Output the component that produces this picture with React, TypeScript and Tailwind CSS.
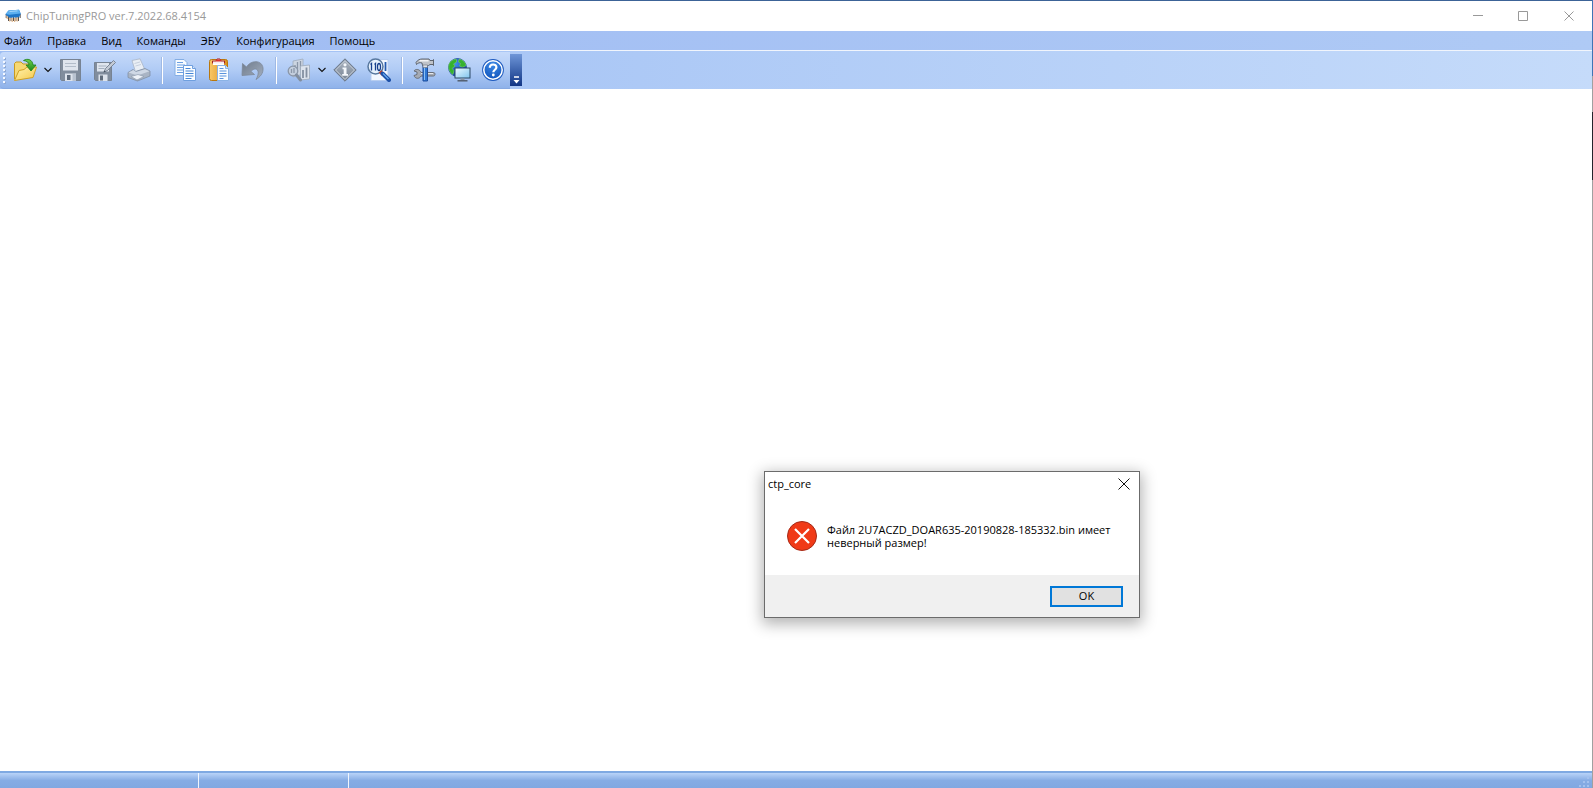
import type { ReactNode } from "react";

const menus = ["Файл", "Правка", "Вид", "Команды", "ЭБУ", "Конфигурация", "Помощь"];

function Defs() {
  return (
    <svg width="0" height="0" className="absolute" aria-hidden="true">
      <defs>
        <linearGradient id="folder" x1="0" y1="0" x2="1" y2="1">
          <stop offset="0" stopColor="#fff3b0" />
          <stop offset="1" stopColor="#f5c84a" />
        </linearGradient>
        <linearGradient id="green" x1="0" y1="0" x2="0" y2="1">
          <stop offset="0" stopColor="#6fd04a" />
          <stop offset="1" stopColor="#1c8a1c" />
        </linearGradient>
        <linearGradient id="gray" x1="0" y1="0" x2="0" y2="1">
          <stop offset="0" stopColor="#a9b2bf" />
          <stop offset="1" stopColor="#7b8796" />
        </linearGradient>
        <linearGradient id="arrow" x1="0" y1="0" x2="1" y2="1">
          <stop offset="0" stopColor="#6f7b8b" />
          <stop offset="1" stopColor="#a5b1c2" />
        </linearGradient>
        <linearGradient id="board" x1="0" y1="0" x2="1" y2="0">
          <stop offset="0" stopColor="#f9c766" />
          <stop offset="1" stopColor="#d98f1c" />
        </linearGradient>
        <linearGradient id="screen" x1="0" y1="0" x2="1" y2="1">
          <stop offset="0" stopColor="#e8f8ff" />
          <stop offset="1" stopColor="#84c6ee" />
        </linearGradient>
        <radialGradient id="globe" cx="0.4" cy="0.3" r="0.8">
          <stop offset="0" stopColor="#3f8fe8" />
          <stop offset="1" stopColor="#0a2f9a" />
        </radialGradient>
        <radialGradient id="help" cx="0.5" cy="0.2" r="0.9">
          <stop offset="0" stopColor="#3f8be6" />
          <stop offset="1" stopColor="#0d4fb8" />
        </radialGradient>
      </defs>
    </svg>
  );
}

function Icon({ children }: { children: ReactNode }) {
  return (
    <svg width="24" height="24" viewBox="0 0 24 24" fill="none" aria-hidden="true">
      {children}
    </svg>
  );
}

function OpenIcon() {
  return (
    <Icon>
      <path d="M1.500 21V5.500L3 4h5l2 2h6l1.500 1.500V11" fill="#f6d873" stroke="#c99a20" />
      <path d="M1.500 22.500L6 12.500l5-1 3-2.500h9.500L20 19.500 1.500 22.500z" fill="url(#folder)" stroke="#d0a024" strokeLinejoin="round" />
      <path d="M10.500 2.500c4-2.500 9-1 9.500 4.500h3l-5 6-5-6h3c0-2.500-2-4-5.500-4.500z" fill="url(#green)" stroke="#1b7d1b" strokeWidth="0.800" strokeLinejoin="round" />
    </Icon>
  );
}

function SaveIcon() {
  return (
    <Icon>
      <path d="M1.500 1.500h20v21h-19l-1-1z" fill="#818d9d" stroke="#778393" strokeLinejoin="round" />
      <path d="M4 2h15v10.500H4z" fill="#dfe5ee" />
      <path d="M6 5.500h11M6 8.500h11" stroke="#b3bdca" />
      <path d="M6 15.500h11V23H6z" fill="#dde3ec" />
      <path d="M8 17h3.500v5H8z" fill="#5f6b7b" />
      <path d="M13.500 16H17v7h-3.500z" fill="#b9c3d1" />
    </Icon>
  );
}

function SaveAsIcon() {
  return (
    <Icon>
      <path d="M1.500 4.500h17v18h-16l-1-1z" fill="#818d9d" stroke="#778393" strokeLinejoin="round" />
      <path d="M4 5h12v8.500H4z" fill="#dfe5ee" />
      <path d="M5.500 8h8M5.500 10.500h6" stroke="#a5b0bf" />
      <path d="M5.500 16.500h9V23h-9z" fill="#dde3ec" />
      <path d="M7 17.500h3v5H7z" fill="#5f6b7b" />
      <path d="M11 14l1.500-3.500 8-8 2 2-8 8L11 14z" fill="#c3cad5" stroke="#727e8e" strokeWidth="0.900" />
      <path d="M10.500 14.500l2.200-1-1.100-1.100z" fill="#3f4a58" />
    </Icon>
  );
}

function PrintIcon() {
  return (
    <Icon>
      <path d="M5 2.500L13 .8l4.500 10-9 3z" fill="#e9eef5" stroke="#aab5c5" strokeWidth="0.800" />
      <path d="M7.500 5.500l5.500-1.500M8.500 8l5.500-1.500" stroke="#bdc7d5" strokeWidth="0.800" />
      <path d="M1 14.500l5-3 2.500 2L18 10.500l5 2.500v5l-12.500 5L1 19.500z" fill="#a9b4c4" stroke="#8190a4" strokeWidth="0.800" strokeLinejoin="round" />
      <path d="M1.500 14.500l5-2.500 2.500 2 9-2.800 4.500 2-12 4.300z" fill="#cfd8e5" />
      <path d="M10.500 18v4.500" stroke="#8795a8" />
      <path d="M4 18.500l7-2 6 2-7 3.500z" fill="#eef2f8" stroke="#8e9caf" strokeWidth="0.700" />
    </Icon>
  );
}

function CopyIcon() {
  return (
    <Icon>
      <path d="M2 1.500h9l3 3v13H2z" fill="#f7fbff" stroke="#84aee4" />
      <path d="M4 4.500h6M4 7h8M4 9.500h8M4 12h6M4 14.500h6" stroke="#6a9fe2" />
      <path d="M10.500 7.500h9l3 3v12h-12z" fill="#fafdff" stroke="#6f9fdf" />
      <path d="M19.500 7.500v3h3" fill="#cfe2f9" stroke="#6f9fdf" />
      <path d="M12.500 10.500h5M12.500 13h8M12.500 15.500h8M12.500 18h8M12.500 20.500h6" stroke="#4686d6" />
    </Icon>
  );
}

function PasteIcon() {
  return (
    <Icon>
      <rect x="2.500" y="1.500" width="18" height="21" rx="2" fill="url(#board)" stroke="#b9770d" />
      <path d="M6 2.500h11V7H6z" fill="#fff" />
      <path d="M5.500 5.500V3h3.500l1-2h3l1 2h3.500v2.500" fill="#f8eaea" stroke="#a32020" />
      <path d="M9 2.500h5" stroke="#d93030" strokeWidth="2" />
      <path d="M10.500 7.500h8l3 3v12h-11z" fill="#f8fcff" stroke="#8bb3e6" />
      <path d="M18.500 7.500v3h3" fill="#d3e5fa" stroke="#8bb3e6" />
      <path d="M12.500 10.500h4M12.500 13h7M12.500 15.500h7M12.500 18h7M12.500 20.500h4" stroke="#5a93dc" />
    </Icon>
  );
}

function UndoIcon() {
  return (
    <Icon>
      <path d="M1.500 5.500l4 3.500C9.500 2 21 1.500 22 10c.500 5.500-3 9-7 11.500 3-5 3-10-.5-10.500-2-.2-3.500 1-4.500 2.500l3.500 3-12.500 1z" fill="url(#arrow)" stroke="#7c8898" strokeWidth="0.800" strokeLinejoin="round" />
    </Icon>
  );
}

function ChartIcon() {
  return (
    <Icon>
      <path d="M6 3l10-2v15l-10 3z" fill="#ccd5e1" stroke="#a0acbc" strokeWidth="0.800" />
      <path d="M8 7v5M10.500 4v7M13.500 3v9" stroke="#8a96a7" strokeWidth="1.300" />
      <path d="M13.500 8l9-1v14l-9 1z" fill="#dce3ed" stroke="#9daaba" strokeWidth="0.800" />
      <path d="M16 12v8M19.500 9.500v10" stroke="#8490a1" strokeWidth="1.800" />
      <circle cx="6" cy="13" r="4.800" fill="#c3cedd" stroke="#8a96a7" strokeWidth="1.300" />
      <path d="M4.500 11v4M7 10v5" stroke="#8c98a9" strokeWidth="1.300" />
      <path d="M9.500 17l4 5" stroke="#828e9f" strokeWidth="3" strokeLinecap="round" />
    </Icon>
  );
}

function InfoIcon() {
  return (
    <Icon>
      <path d="M12 .8L23.200 12 12 23.200.8 12z" fill="#6f7c8c" stroke="#6f7b8b" />
      <path d="M12 2.500L21.500 12 12 21.500 2.500 12z" fill="url(#gray)" stroke="#d5dce6" />
      <circle cx="12" cy="6.800" r="1.600" fill="#f4f7fb" />
      <path d="M9.500 9.500h4v6.500h1.500v1.800H9.200V16h1.500v-4.700H9.500z" fill="#f4f7fb" />
    </Icon>
  );
}

function SearchIcon() {
  return (
    <Icon>
      <path d="M4 1.500h17v21H4z" fill="#f2f7ff" stroke="#b7cdf0" />
      <path d="M18.500 4v9" stroke="#245bb0" strokeWidth="1.800" />
      <circle cx="8.500" cy="8.500" r="7.500" fill="#e6f1fd" stroke="#58789f" strokeWidth="1.500" />
      <path d="M3.500 6.500l1-1v7M7.500 6.500l1-1v7" stroke="#173f8c" strokeWidth="1.300" />
      <ellipse cx="12" cy="9" rx="1.500" ry="3.500" stroke="#173f8c" strokeWidth="1.300" />
      <path d="M13 13.500l3 3" stroke="#c2452e" strokeWidth="3.500" />
      <path d="M15.500 15.500l6.500 6.500" stroke="#1c50a8" strokeWidth="4" strokeLinecap="round" />
      <path d="M16 15.500l5.500 5.500" stroke="#68a8ec" strokeWidth="1.200" />
    </Icon>
  );
}

function ToolsIcon() {
  return (
    <Icon>
      <path d="M1 13l3 1v2.500l-3 1c1 3.500 5.500 3.800 7 .5h12.500c2 0 2-3.500 0-3.500H8c-1-3.500-5.500-4-7-1.500z" fill="#a6abb4" stroke="#62666e" strokeWidth="0.900" strokeLinejoin="round" />
      <path d="M8 15.500h12" stroke="#e6e8eb" />
      <path d="M3 4.500C4.500 2 7 1 9 1h7l1 1.500h3l.5-1v6l-.5-1h-3l-1.500 1h-6L9 5C6.500 4.200 5 5 3.500 6.500z" fill="#bfc3c9" stroke="#555a62" strokeWidth="0.900" strokeLinejoin="round" />
      <path d="M6.500 2.800h9" stroke="#fff" strokeWidth="1.200" />
      <path d="M10 7.500h4.500v15.500H10z" fill="#2f78d4" stroke="#1f4f9e" />
      <path d="M11.500 9v13" stroke="#8cc0f5" />
      <path d="M10 7h4.500v2.500H10z" fill="#dfe2e6" stroke="#6b7078" strokeWidth="0.600" />
    </Icon>
  );
}

function NetworkIcon() {
  return (
    <Icon>
      <circle cx="10.500" cy="9.500" r="9" fill="url(#globe)" stroke="#17479c" strokeWidth="0.800" />
      <path d="M2.500 5C5 2 8 .8 9.500 1.500L9.500 4 6.500 6l1.500 2L5 10.500l2 2-1 4C2.500 14.500.5 10 2.500 5zM12 1.200c4 .5 6.500 3 7 6.500l-3.500 1.500L12.500 8l1-2.500-2-1.500z" fill="#35b22e" stroke="#86dc62" strokeWidth="0.500" />
      <path d="M7.500 9.500h16v11h-16z" fill="#2a4763" />
      <path d="M8.500 10.500h14v9h-14z" fill="url(#screen)" />
      <path d="M13.500 20.500h4V22h-4z" fill="#8a95a3" />
      <path d="M10.500 22.800h10" stroke="#4d5967" strokeWidth="1.400" />
    </Icon>
  );
}

function HelpIcon() {
  return (
    <Icon>
      <circle cx="12" cy="12" r="10.900" fill="#1d5abf" />
      <circle cx="12" cy="12" r="9.200" fill="url(#help)" stroke="#fff" strokeWidth="1.500" />
      <path d="M8.800 9.800c0-4.400 6.600-4.200 6.600-.5 0 2.400-3.100 2.500-3.100 5" stroke="#fff" strokeWidth="2.200" />
      <circle cx="12.300" cy="17" r="1.400" fill="#fff" />
    </Icon>
  );
}

function ChipIcon() {
  return (
    <svg width="16" height="16" viewBox="0 0 16 16" fill="none" aria-hidden="true">
      <path d="M1.200 6v4M3.500 8v5M6 9v4M8.500 9v4M11 9v4M13.500 8v5M15.200 6v4" stroke="#5a5350" />
      <path d="M2.200 8v3M4.700 9v4.500M7.200 10v4M9.700 10v4M12.200 9v4.500" stroke="#dcb285" strokeWidth="1.200" />
      <path d="M3.500 2.500L14 1.800l1.800 4L14 9.200l-9.500.6L.5 6.500z" fill="#1f76c8" />
      <path d="M3.500 2.500L14 1.800l1.500 3.700-11 1.300L.5 6z" fill="#5db0f0" />
      <path d="M4.500 3.500l8-.6" stroke="#a6d8fb" />
    </svg>
  );
}

function ToolButton({ label, children }: { label: string; children: ReactNode }) {
  return (
    <button type="button" aria-label={label} className="flex h-full w-[34px] items-center justify-center">
      {children}
    </button>
  );
}

function DropButton({ label }: { label: string }) {
  return (
    <button type="button" aria-label={label} className="flex h-full w-3 items-center justify-center">
      <svg width="8" height="6" viewBox="0 0 8 6" fill="none" aria-hidden="true">
        <path d="M.5 1L4 4.500 7.500 1" stroke="#111" strokeWidth="1.100" />
      </svg>
    </button>
  );
}

function Separator() {
  return (
    <div className="flex w-3 justify-center">
      <div className="h-[27px] w-[2px] border-l border-[#9fb9e4] bg-white" />
    </div>
  );
}

function TitleBar() {
  return (
    <header className="flex h-[30px] items-center bg-white pl-[5px] text-[#999999]">
      <ChipIcon />
      <h1 className="ml-[5px] flex-1 text-[11px]">ChipTuningPRO ver.7.2022.68.4154</h1>
      <button type="button" aria-label="Свернуть" className="flex h-full w-[45px] items-center justify-center">
        <svg width="11" height="11" viewBox="0 0 11 11" stroke="currentColor"><path d="M0 4.500h10" /></svg>
      </button>
      <button type="button" aria-label="Развернуть" className="flex h-full w-[45px] items-center justify-center">
        <svg width="11" height="11" viewBox="0 0 11 11" fill="none" stroke="currentColor"><path d="M.5.5h9v9h-9z" /></svg>
      </button>
      <button type="button" aria-label="Закрыть" className="flex h-full w-[46px] items-center justify-center">
        <svg width="11" height="11" viewBox="0 0 11 11" stroke="currentColor"><path d="M.5.5l9 9M9.500.5l-9 9" /></svg>
      </button>
    </header>
  );
}

function Toolbar() {
  return (
    <div className="flex h-[38px] bg-linear-to-r from-[#9dbdf3] to-[#c5dbfa] pt-px">
      <div role="toolbar" aria-label="Панель инструментов" className="flex items-center rounded-l-sm border-b border-[#86a9e2] bg-linear-to-b from-[#c6dafa] via-[#b0cbf5] to-[#8fb2ea]">
        <div className="flex w-2 flex-col items-center gap-[2px]">
          {[0, 1, 2, 3, 4, 5, 6].map((dot) => (
            <span key={dot} className="h-[2px] w-[2px] bg-[#f4f8ff] shadow-[1px_1px_0_#8fa9d3]" />
          ))}
        </div>
        <ToolButton label="Открыть"><OpenIcon /></ToolButton>
        <DropButton label="Недавние файлы" />
        <ToolButton label="Сохранить"><SaveIcon /></ToolButton>
        <ToolButton label="Сохранить как"><SaveAsIcon /></ToolButton>
        <ToolButton label="Печать"><PrintIcon /></ToolButton>
        <Separator />
        <ToolButton label="Копировать"><CopyIcon /></ToolButton>
        <ToolButton label="Вставить"><PasteIcon /></ToolButton>
        <ToolButton label="Отменить"><UndoIcon /></ToolButton>
        <Separator />
        <ToolButton label="Графики"><ChartIcon /></ToolButton>
        <DropButton label="Выбор графика" />
        <ToolButton label="Информация"><InfoIcon /></ToolButton>
        <ToolButton label="Поиск"><SearchIcon /></ToolButton>
        <Separator />
        <ToolButton label="Настройки"><ToolsIcon /></ToolButton>
        <ToolButton label="Сеть"><NetworkIcon /></ToolButton>
        <ToolButton label="Справка"><HelpIcon /></ToolButton>
      </div>
      <button type="button" aria-label="Другие кнопки" className="mt-[2px] mb-[3px] flex w-3 items-end justify-center bg-linear-to-b from-[#6f96d8] to-[#123585] pb-[2px]">
        <svg width="7" height="8" viewBox="0 0 7 8" aria-hidden="true">
          <path d="M1 1h5" stroke="#fff" strokeWidth="1.500" />
          <path d="M.5 4h6L3.500 7.500z" fill="#fff" />
        </svg>
      </button>
    </div>
  );
}

function ErrorDialog() {
  return (
    <section role="alertdialog" aria-labelledby="dialog-title" aria-describedby="dialog-text" className="absolute top-[471px] left-[764px] w-[376px] border border-[#6b6b6b] bg-white shadow-[0_4px_14px_2px_rgba(0,0,0,0.3)]">
      <div className="flex h-6 items-center justify-between pr-[9px] pl-[3px]">
        <h2 id="dialog-title" className="text-[11px]">ctp_core</h2>
        <button type="button" aria-label="Закрыть">
          <svg width="12" height="12" viewBox="0 0 12 12" stroke="#111"><path d="M.5.5l11 11M11.500.5l-11 11" /></svg>
        </button>
      </div>
      <div className="flex gap-[9px] py-6 pl-[22px]">
        <svg width="31" height="31" viewBox="0 0 31 31" aria-hidden="true">
          <circle cx="15" cy="16" r="14.500" fill="#f03a17" stroke="#a52a18" />
          <path d="M8 9l14 14M22 9l-14 14" stroke="#fff" strokeWidth="2.200" />
        </svg>
        <p id="dialog-text" className="w-[290px] pt-[3px] text-[11px] leading-[13px]">
          Файл 2U7ACZD_DOAR635-20190828-185332.bin имеет неверный размер!
        </p>
      </div>
      <div className="flex h-[42px] items-center justify-end bg-[#f0f0f0] pr-4">
        <button type="button" className="h-[21px] w-[73px] border-2 border-[#0078d7] bg-[#e1e1e1] text-[11px] leading-4">OK</button>
      </div>
    </section>
  );
}

function StatusBar() {
  return (
    <footer className="flex h-[17px] border-t-2 border-[#7fa9e2] bg-linear-to-b from-[#b9d3f8] via-[#86ace4] to-[#81a8e1]">
      <div className="w-[199px] border-r border-[#f0f5fd]" />
      <div className="w-[150px] border-r border-[#f0f5fd]" />
      <div className="flex flex-1 items-end justify-end pr-[2px]">
        <svg width="12" height="12" viewBox="0 0 12 12" fill="#a4c1ee" aria-hidden="true">
          <path d="M9 1h2v2H9zM5 5h2v2H5zM9 5h2v2H9zM1 9h2v2H1zM5 9h2v2H5zM9 9h2v2H9z" />
        </svg>
      </div>
    </footer>
  );
}

export default function App() {
  return (
    <div className="relative flex min-h-screen bg-white font-['Open_Sans','Noto_Sans',sans-serif] text-black">
      <Defs />
      <main className="flex min-w-0 flex-1 flex-col border-t border-[#3c6397]">
        <TitleBar />
        <nav aria-label="Меню" className="flex h-5 items-center gap-[15px] border-b border-[#f1f5fc] bg-linear-to-r from-[#9fbbf3] to-[#afcaf5] pt-[2px] pl-1 text-[11px]">
          {menus.map((menu) => (
            <button key={menu} type="button">{menu}</button>
          ))}
        </nav>
        <Toolbar />
        <div className="flex-1" />
        <StatusBar />
      </main>
      <div className="flex w-px flex-col bg-[#a0a0a0]">
        <div className="h-[76px] bg-[#3f75b5]" />
        <div className="mt-9 h-[68px] bg-[#24242c]" />
      </div>
      <ErrorDialog />
    </div>
  );
}
